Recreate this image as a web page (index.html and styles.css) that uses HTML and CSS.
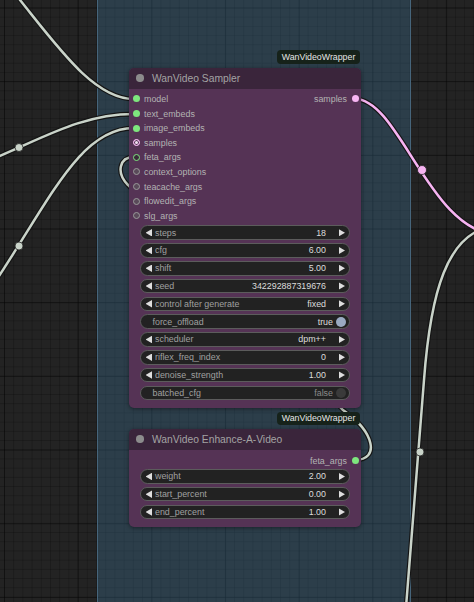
FILE: index.html
```html
<!DOCTYPE html>
<html>
<head>
<meta charset="utf-8">
<link rel="stylesheet" href="styles.css">
</head>
<body>
<div class="canvas">
  <div class="group"></div>
  <svg class="links" width="474" height="602" viewBox="0 0 474 602">
    <g class="outline">
      <path d="M20,0 C60,50 95,99 134,99"/>
      <path d="M-10,160 C40,140 80,114 134,114"/>
      <path d="M-5,282 C50,200 80,128 134,128"/>
      <path d="M355,460 C380,460 375,432 343,410 L128,185 C116,173 119,157 134,157"/>
      <path d="M500,226 C445,226 430,300 424,380 S412,540 405,620"/>
      <path d="M355,99 C400,99 430,235 500,235"/>
    </g>
    <g class="gray">
      <path d="M20,0 C60,50 95,99 134,99"/>
      <path d="M-10,160 C40,140 80,114 134,114"/>
      <path d="M-5,282 C50,200 80,128 134,128"/>
      <path d="M355,460 C380,460 375,432 343,410 L128,185 C116,173 119,157 134,157"/>
      <path d="M500,226 C445,226 430,300 424,380 S412,540 405,620"/>
    </g>
    <g class="pink">
      <path d="M355,99 C400,99 430,235 500,235"/>
    </g>
    <circle class="mid-gray" cx="19" cy="147.5" r="4"/>
    <circle class="mid-gray" cx="19" cy="246" r="4"/>
    <circle class="mid-gray" cx="420" cy="452" r="4"/>
    <circle class="mid-pink" cx="422" cy="170" r="4.5"/>
  </svg>

  <div class="badge badge-1">WanVideoWrapper</div>
  <div class="node node-sampler">
    <div class="title"><span class="title-dot"></span><span class="title-text">WanVideo Sampler</span></div>
    <div class="body">
      <div class="slots">
        <div class="slot-row">
          <div class="in"><span class="dot green"></span><span class="slot-label">model</span></div>
          <div class="out"><span class="slot-label">samples</span><span class="dot pink"></span></div>
        </div>
        <div class="slot-row"><div class="in"><span class="dot green"></span><span class="slot-label">text_embeds</span></div></div>
        <div class="slot-row"><div class="in"><span class="dot green"></span><span class="slot-label">image_embeds</span></div></div>
        <div class="slot-row"><div class="in"><span class="dot ring ring-pink"></span><span class="slot-label">samples</span></div></div>
        <div class="slot-row"><div class="in"><span class="dot ring ring-green"></span><span class="slot-label">feta_args</span></div></div>
        <div class="slot-row"><div class="in"><span class="dot ring ring-gray"></span><span class="slot-label">context_options</span></div></div>
        <div class="slot-row"><div class="in"><span class="dot ring ring-gray"></span><span class="slot-label">teacache_args</span></div></div>
        <div class="slot-row"><div class="in"><span class="dot ring ring-gray"></span><span class="slot-label">flowedit_args</span></div></div>
        <div class="slot-row"><div class="in"><span class="dot ring ring-gray"></span><span class="slot-label">slg_args</span></div></div>
      </div>
      <div class="widgets">
        <div class="widget"><span class="arrow-l"></span><span class="w-label">steps</span><span class="w-value">18</span><span class="arrow-r"></span></div>
        <div class="widget"><span class="arrow-l"></span><span class="w-label">cfg</span><span class="w-value">6.00</span><span class="arrow-r"></span></div>
        <div class="widget"><span class="arrow-l"></span><span class="w-label">shift</span><span class="w-value">5.00</span><span class="arrow-r"></span></div>
        <div class="widget"><span class="arrow-l"></span><span class="w-label">seed</span><span class="w-value">342292887319676</span><span class="arrow-r"></span></div>
        <div class="widget"><span class="arrow-l"></span><span class="w-label">control after generate</span><span class="w-value">fixed</span><span class="arrow-r"></span></div>
        <div class="widget toggle"><span class="w-label">force_offload</span><span class="w-value">true</span><span class="knob on"></span></div>
        <div class="widget"><span class="arrow-l"></span><span class="w-label">scheduler</span><span class="w-value">dpm++</span><span class="arrow-r"></span></div>
        <div class="widget"><span class="arrow-l"></span><span class="w-label">riflex_freq_index</span><span class="w-value">0</span><span class="arrow-r"></span></div>
        <div class="widget"><span class="arrow-l"></span><span class="w-label">denoise_strength</span><span class="w-value">1.00</span><span class="arrow-r"></span></div>
        <div class="widget toggle"><span class="w-label">batched_cfg</span><span class="w-value off">false</span><span class="knob"></span></div>
      </div>
    </div>
  </div>

  <div class="badge badge-2">WanVideoWrapper</div>
  <div class="node node-enhance">
    <div class="title"><span class="title-dot"></span><span class="title-text">WanVideo Enhance-A-Video</span></div>
    <div class="body">
      <div class="slots">
        <div class="slot-row">
          <div class="in"></div>
          <div class="out"><span class="slot-label">feta_args</span><span class="dot green"></span></div>
        </div>
      </div>
      <div class="widgets">
        <div class="widget"><span class="arrow-l"></span><span class="w-label">weight</span><span class="w-value">2.00</span><span class="arrow-r"></span></div>
        <div class="widget"><span class="arrow-l"></span><span class="w-label">start_percent</span><span class="w-value">0.00</span><span class="arrow-r"></span></div>
        <div class="widget"><span class="arrow-l"></span><span class="w-label">end_percent</span><span class="w-value">1.00</span><span class="arrow-r"></span></div>
      </div>
    </div>
  </div>
</div>
</body>
</html>
```

FILE: styles.css
```css
* { box-sizing: border-box; }
html, body { margin: 0; padding: 0; background: #202020; }
body { font-family: "Liberation Sans", Arial, sans-serif; }

.canvas {
  position: relative;
  width: 474px;
  height: 602px;
  overflow: hidden;
  background-color: #232323;
  background-image:
    linear-gradient(rgba(0,0,0,0.36) 1px, transparent 1px),
    linear-gradient(90deg, rgba(0,0,0,0.36) 1px, transparent 1px),
    linear-gradient(rgba(0,0,0,0.2) 1px, transparent 1px),
    linear-gradient(90deg, rgba(0,0,0,0.2) 1px, transparent 1px);
  background-size: 73.7px 73.7px, 73.7px 73.7px, 9.21px 9.21px, 9.21px 9.21px;
  background-position: 4px 7.5px, 4px 7.5px, 4px 7.5px, 4px 7.5px;
}

.group {
  position: absolute;
  left: 97px;
  top: -2px;
  width: 314px;
  height: 606px;
  background: rgba(63, 114, 150, 0.34);
  border-left: 1px solid #46657b;
  border-right: 1px solid #46657b;
}

.links { position: absolute; left: 0; top: 0; }
.links path { fill: none; stroke-linecap: round; }
.links .outline path { stroke: #151515; stroke-width: 4.8; }
.links .gray path { stroke: #c9d3c9; stroke-width: 2.5; }
.links .pink path { stroke: #f6b3f2; stroke-width: 2.6; }
.mid-gray { fill: #c9d3c9; stroke: #222; stroke-width: 0.8; }
.mid-pink { fill: #f6b3f2; stroke: #222; stroke-width: 0.8; }

.badge {
  position: absolute;
  left: 277px;
  width: 83px;
  height: 14px;
  border-radius: 4px;
  background: #16221a;
  color: #e6e6e6;
  font-size: 8.8px;
  line-height: 14px;
  text-align: center;
}
.badge-1 { top: 50px; }
.badge-2 { top: 412px; height: 13px; line-height: 13px; }

.node {
  position: absolute;
  left: 129px;
  width: 232px;
  border-radius: 5px;
  overflow: hidden;
  background: #553355;
  box-shadow: 0 1px 4px rgba(0,0,0,0.45);
}
.node-sampler { top: 67.5px; }
.node-enhance { top: 428.5px; }

.title {
  height: 21px;
  background: #3a253b;
  display: flex;
  align-items: center;
  padding-left: 7px;
}
.title-dot {
  width: 7.5px;
  height: 7.5px;
  border-radius: 50%;
  background: #8c8c8c;
  margin-right: 8.5px;
}
.title-text {
  color: #a3a3a3;
  font-size: 10.3px;
}

.body {
  display: flex;
  flex-direction: column;
  padding: 3.2px 0 7.5px 0;
}
.node-enhance .body { padding-top: 3.9px; padding-bottom: 8px; }

.slots { display: flex; flex-direction: column; }
.slot-row {
  height: 14.6px;
  display: flex;
  align-items: center;
  justify-content: space-between;
  padding: 0 2.5px 0 3.5px;
}
.in, .out { display: flex; align-items: center; }
.slot-label { color: #b2b2b2; font-size: 8.9px; }
.in .slot-label { margin-left: 4.5px; }
.out .slot-label { margin-right: 4.5px; }

.dot {
  width: 7px;
  height: 7px;
  border-radius: 50%;
  flex: none;
}
.dot.green { background: #7ee67e; }
.dot.pink { background: #f7b6f3; }
.dot.ring { background: #4a2d4b; border: 1.8px solid #999; }
.dot.ring-pink { border-color: #f7b6f3; background: #f3e3f3; box-shadow: inset 0 0 0 1px #553355; }
.dot.ring-green { border-color: #7ee67e; background: #3a2a3a; }
.dot.ring-gray { border-color: #9a9a9a; background: #5a4a5a; }

.widgets {
  display: flex;
  flex-direction: column;
  gap: 3.3px;
  padding: 0 11px 0 11px;
  margin-top: 2.4px;
}
.node-enhance .widgets { margin-top: 1.2px; }

.widget {
  height: 14.5px;
  border-radius: 8px;
  background: #222;
  border: 1px solid #5c5c5c;
  display: flex;
  align-items: center;
  padding: 0 4px 0 4.5px;
  font-size: 8.9px;
}
.w-label { color: #a0a0a0; margin-left: 3px; flex: 1; white-space: nowrap; }
.w-value { color: #dcdcdc; margin-right: 12.5px; white-space: nowrap; }
.w-value.off { color: #8a8a8a; }

.arrow-l, .arrow-r {
  width: 6.5px;
  height: 7.5px;
  background: #dedede;
  flex: none;
}
.arrow-l { clip-path: polygon(0 50%, 100% 0, 100% 100%); }
.arrow-r { clip-path: polygon(0 0, 100% 50%, 0 100%); }

.widget.toggle { padding-left: 8.5px; padding-right: 3.5px; }
.widget.toggle .w-label { margin-left: 3px; }
.widget.toggle .w-value { margin-right: 2.5px; }
.knob {
  width: 10px;
  height: 10px;
  border-radius: 50%;
  background: #3a3a3a;
  flex: none;
}
.knob.on { background: #9aaac2; }
```
